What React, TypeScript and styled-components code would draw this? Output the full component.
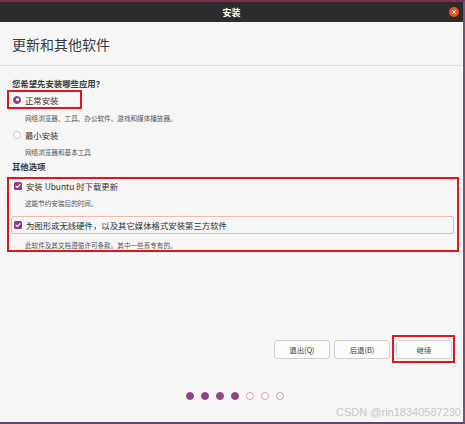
import React from 'react';
import styled, { createGlobalStyle } from 'styled-components';

const GlobalStyle = createGlobalStyle`
  html, body {
    margin: 0;
    padding: 0;
    background: #f6f6f6;
  }

  body {
    font-family: 'Noto Sans CJK SC', 'Noto Sans', sans-serif;
  }
`;

const Screen = styled.div`
  position: relative;
  width: 465px;
  height: 424px;
  box-sizing: border-box;
  border-top: 2px solid #7c2c4c;
  border-right: 2px solid #6d5776;
  border-bottom: 2px solid #5f4a66;
  display: flex;
  flex-direction: column;
  background: #f6f6f6;
  overflow: hidden;
`;

const TitleBar = styled.div`
  height: 20px;
  flex: none;
  background: #2c2c2c;
  display: flex;
  align-items: center;
  justify-content: center;
  position: relative;
  color: #ffffff;
  font-size: 9px;
  font-weight: 700;
`;

const CloseButton = styled.div`
  position: absolute;
  right: 4px;
  top: 5px;
  width: 10px;
  height: 10px;
  border-radius: 50%;
  background: #e9541f;
  display: flex;
  align-items: center;
  justify-content: center;
`;

const Header = styled.div`
  height: 44px;
  flex: none;
  box-sizing: border-box;
  padding: 1px 0 0 12px;
  display: flex;
  align-items: center;
  border-bottom: 1px solid #e2e2e2;
  color: #3b3b3b;
  font-size: 14px;
`;

const Body = styled.div`
  flex: 1;
  display: flex;
  flex-direction: column;
  padding: 11px 0 0 7px;
`;

const SectionTitle = styled.div<{ $top?: number }>`
  padding-left: 5px;
  margin-top: ${(p) => p.$top ?? 0}px;
  font-size: 8.4px;
  line-height: 12px;
  font-weight: 700;
  color: #3a3a3a;
`;

const OptionRow = styled.div<{ $marked?: boolean; $top?: number }>`
  box-sizing: border-box;
  height: 19px;
  align-self: flex-start;
  margin-top: ${(p) => p.$top ?? 0}px;
  padding: 0 21px 0 4px;
  display: flex;
  align-items: center;
  gap: 4px;
  border: 2px solid ${(p) => (p.$marked ? '#e3141c' : 'transparent')};
  font-size: 8.4px;
  color: #333;
`;

const Radio = styled.span<{ $on?: boolean }>`
  width: 8px;
  height: 8px;
  box-sizing: border-box;
  border-radius: 50%;
  flex: none;
  background: ${(p) => (p.$on ? '#8b3f87' : '#ffffff')};
  border: 1px solid ${(p) => (p.$on ? '#8b3f87' : '#c9c9c9')};
  display: flex;
  align-items: center;
  justify-content: center;

  &::after {
    content: '';
    width: 3px;
    height: 3px;
    border-radius: 50%;
    background: #fff;
    display: ${(p) => (p.$on ? 'block' : 'none')};
  }
`;

const Description = styled.div<{ $top?: number }>`
  padding-left: 18px;
  margin-top: ${(p) => p.$top ?? 0}px;
  font-size: 6.6px;
  line-height: 10px;
  color: #555;
`;

const MarkedGroup = styled.div`
  margin-top: 5px;
  width: 452px;
  height: 75px;
  box-sizing: border-box;
  border: 2px solid #e3141c;
  display: flex;
  flex-direction: column;
`;

const CheckRow = styled.div<{ $focused?: boolean; $top?: number }>`
  box-sizing: border-box;
  height: ${(p) => (p.$focused ? 18 : 14)}px;
  margin: ${(p) => p.$top ?? 0}px 3px 0 2px;
  padding-left: 2px;
  display: flex;
  align-items: center;
  gap: 4px;
  border: 1px solid ${(p) => (p.$focused ? '#f3b9a2' : 'transparent')};
  border-radius: 2px;
  font-size: 8.4px;
  color: #333;
`;

const Checkbox = styled.span`
  width: 8px;
  height: 8px;
  flex: none;
  border-radius: 1.5px;
  background: #8b3f87;
  display: flex;
  align-items: center;
  justify-content: center;
`;

const GroupDescription = styled(Description)`
  padding-left: 16px;
`;

const Footer = styled.div`
  margin-top: auto;
  display: flex;
  flex-direction: column;
  align-items: stretch;
  padding-bottom: 22px;
`;

const Actions = styled.div`
  display: flex;
  justify-content: flex-end;
  align-items: center;
  gap: 4px;
  padding-right: 8px;
  height: 28px;
`;

const Button = styled.div`
  width: 56px;
  height: 19px;
  box-sizing: border-box;
  border: 1px solid #cfcfcf;
  border-radius: 3px;
  background: #fbfbfb;
  display: flex;
  align-items: center;
  justify-content: center;
  font-size: 7.4px;
  color: #3a3a3a;
`;

const ButtonMark = styled.div`
  margin-left: -2px;
  box-sizing: border-box;
  height: 28px;
  padding: 0 1px 0 2px;
  border: 2px solid #e3141c;
  display: flex;
  align-items: center;
`;

const Dots = styled.div`
  margin-top: 29px;
  display: flex;
  justify-content: center;
  gap: 7px;
  padding-right: 1px;
`;

const Dot = styled.span<{ $done?: boolean }>`
  width: 8px;
  height: 8px;
  box-sizing: border-box;
  border-radius: 50%;
  background: ${(p) => (p.$done ? '#8e4689' : '#ffffff')};
  border: 1px solid ${(p) => (p.$done ? '#8e4689' : '#c99ec6')};
`;

const Watermark = styled.div`
  position: absolute;
  right: 2px;
  bottom: 4px;
  font-family: 'Liberation Sans', Arial, sans-serif;
  font-size: 11px;
  color: #c9c9c9;
  white-space: nowrap;
`;

const Tick = () => (
  <svg width='6' height='6' viewBox='0 0 6 6'>
    <path d='M1 3.1 L2.4 4.5 L5 1.6' fill='none' stroke='#fff' strokeWidth='1.1' strokeLinecap='round' strokeLinejoin='round' />
  </svg>
);

export default function App (): React.ReactElement {
  const steps = [true, true, true, true, false, false, false];

  return (
    <>
      <GlobalStyle />
      <Screen>
        <TitleBar>
          安装
          <CloseButton>
            <svg width='6' height='6' viewBox='0 0 6 6'>
              <path d='M1.5 1.5 L4.5 4.5 M4.5 1.5 L1.5 4.5' stroke='#fff' strokeWidth='1' strokeLinecap='round' />
            </svg>
          </CloseButton>
        </TitleBar>
        <Header>更新和其他软件</Header>
        <Body>
          <SectionTitle>您希望先安装哪些应用？</SectionTitle>
          <OptionRow $marked $top={1}>
            <Radio $on />
            正常安装
          </OptionRow>
          <Description $top={4}>网络浏览器、工具、办公软件、游戏和媒体播放器。</Description>
          <OptionRow $top={2}>
            <Radio />
            最小安装
          </OptionRow>
          <Description $top={3}>网络浏览器和基本工具</Description>
          <SectionTitle $top={3}>其他选项</SectionTitle>
          <MarkedGroup>
            <CheckRow>
              <Checkbox><Tick /></Checkbox>
              安装 Ubuntu 时下载更新
            </CheckRow>
            <GroupDescription $top={5}>这能节约安装后的时间。</GroupDescription>
            <CheckRow $focused $top={8}>
              <Checkbox><Tick /></Checkbox>
              为图形或无线硬件，以及其它媒体格式安装第三方软件
            </CheckRow>
            <GroupDescription $top={6}>此软件及其文档遵循许可条款。其中一些系专有的。</GroupDescription>
          </MarkedGroup>
          <Footer>
            <Actions>
              <Button>退出(Q)</Button>
              <Button>后退(B)</Button>
              <ButtonMark>
                <Button>继续</Button>
              </ButtonMark>
            </Actions>
            <Dots>
              {steps.map((done, i) => (
                <Dot key={i} $done={done} />
              ))}
            </Dots>
          </Footer>
        </Body>
        <Watermark>CSDN @rin18340587230</Watermark>
      </Screen>
    </>
  );
}
